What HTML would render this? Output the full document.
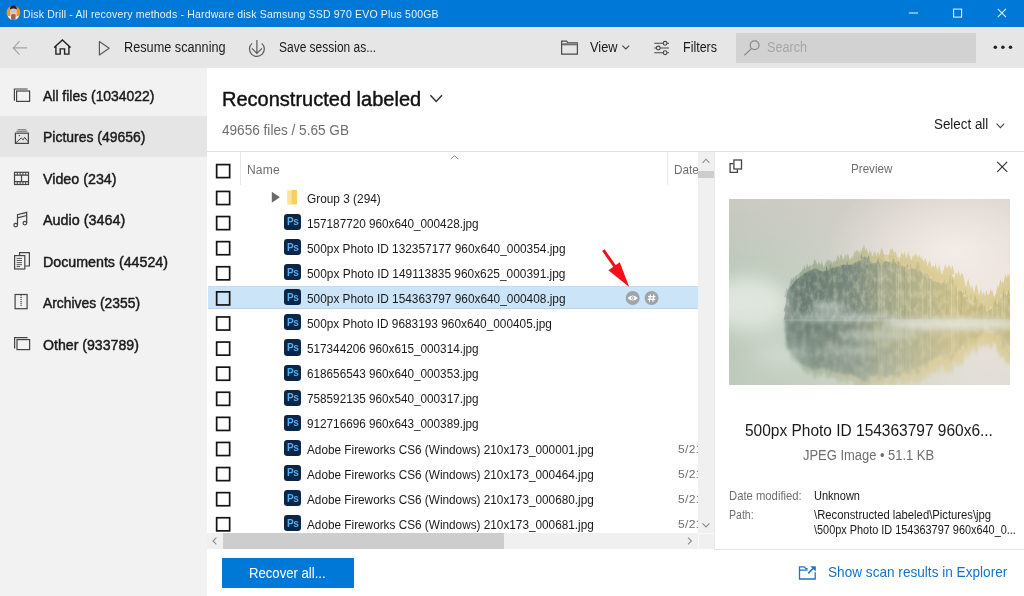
<!DOCTYPE html>
<html lang="en">
<head>
<meta charset="utf-8">
<title>Disk Drill</title>
<style>
*{box-sizing:border-box;margin:0;padding:0}
html,body{width:1024px;height:596px;overflow:hidden;background:#fff}
body{font-family:"Liberation Sans",sans-serif;color:#1a1a1a;position:relative}
.abs{position:absolute}
.t{position:absolute;white-space:nowrap;line-height:1;transform-origin:0 0}
svg{position:absolute;overflow:visible}
#titlebar{left:0;top:0;width:1024px;height:27px;background:#0078d7}
#toolbar{left:0;top:27px;width:1024px;height:41px;background:#e6e6e6}
#sidebar{left:0;top:68px;width:207px;height:528px;background:#f2f2f2}
#sidesel{left:0;top:116px;width:207px;height:41px;background:#e5e5e5}
#search{left:736px;top:33px;width:240px;height:30px;background:#d2d2d2}
#hline{left:207px;top:151px;width:817px;height:1px;background:#e2e2e2}
#colsep1{left:240px;top:152px;width:1px;height:33px;background:#e8e8e8}
#colsep2{left:667px;top:152px;width:1px;height:33px;background:#e8e8e8}
#rowsel{left:208px;top:286px;width:490px;height:23px;background:#cce4f7;border-top:1px solid #c0dcf3;border-bottom:1px solid #b9d6ee}
#vscroll{left:698px;top:152px;width:16px;height:397px;background:#f0f0f0}
#vthumb{left:698px;top:171px;width:16px;height:7px;background:#cdcdcd}
#hscroll{left:207px;top:533px;width:491px;height:16px;background:#f0f0f0}
#hthumb{left:223px;top:533px;width:281px;height:16px;background:#cdcdcd}
#pborder{left:714px;top:152px;width:1px;height:397px;background:#e8e8e8}
#pline{left:714px;top:549px;width:310px;height:1px;background:#e2e2e2}
#recover{left:222px;top:558px;width:132px;height:30px;background:#0078d7}
#datecol{left:673px;top:152px;width:25px;height:381px;overflow:hidden}
.cb{position:absolute;left:215.7px;width:14.8px;height:14.8px;border:1.7px solid #141414;background:transparent}
.ps{position:absolute;left:283.6px;width:17.6px;height:16.2px;border-radius:3.2px;background:#0b2547}
.ps span{transform:scaleX(0.9999);transform-origin:0 0;position:absolute;left:3.3px;top:3.6px;font-size:10px;font-weight:bold;color:#52aef4;line-height:1;letter-spacing:-0.5px}
</style>
</head>
<body>
<!-- TITLE BAR -->
<div id="titlebar" class="abs"></div>
<!-- TOOLBAR -->
<div id="toolbar" class="abs"></div>
<div id="search" class="abs"></div>
<!-- SIDEBAR -->
<div id="sidebar" class="abs"></div>
<div id="sidesel" class="abs"></div>
<!-- MAIN -->
<div id="hline" class="abs"></div>
<div id="colsep1" class="abs"></div>
<div id="colsep2" class="abs"></div>
<div id="rowsel" class="abs"></div>
<div id="vscroll" class="abs"></div>
<div id="vthumb" class="abs"></div>
<div id="hscroll" class="abs"></div>
<div id="hthumb" class="abs"></div>
<div id="pborder" class="abs"></div>
<div class="abs" style="left:698px;top:533px;width:16px;height:1px;background:#fafafa"></div>
<div class="abs" style="left:698px;top:533px;width:1px;height:16px;background:#fafafa"></div>
<div id="pline" class="abs"></div>
<div id="recover" class="abs"></div>
<div id="datecol" class="abs">
<div class="t" style="left:0.8px;top:11.6px;font-size:12px;color:#6e6e6e;transform:scaleX(0.98)">Date modified</div>
<div class="t" style="left:4.6px;top:291.9px;font-size:11.5px;color:#6e6e6e;letter-spacing:0.3px;transform:scaleX(1.05)">5/21/2019 10:15 AM</div>
<div class="t" style="left:4.6px;top:317.0px;font-size:11.5px;color:#6e6e6e;letter-spacing:0.3px;transform:scaleX(1.05)">5/21/2019 10:15 AM</div>
<div class="t" style="left:4.6px;top:342.1px;font-size:11.5px;color:#6e6e6e;letter-spacing:0.3px;transform:scaleX(1.05)">5/21/2019 10:15 AM</div>
<div class="t" style="left:4.6px;top:367.2px;font-size:11.5px;color:#6e6e6e;letter-spacing:0.3px;transform:scaleX(1.05)">5/21/2019 10:15 AM</div>
</div>
<svg width="1024" height="596" viewBox="0 0 1024 596" style="left:0;top:0" fill="none" stroke="#141414" stroke-width="1.7"><rect x="216.65" y="164.6" width="13" height="13"/><rect x="216.65" y="191.45" width="13" height="13.1"/><rect x="216.65" y="216.55" width="13" height="13.1"/><rect x="216.65" y="241.65" width="13" height="13.1"/><rect x="216.65" y="266.75" width="13" height="13.1"/><rect x="216.65" y="291.85" width="13" height="13.1"/><rect x="216.65" y="316.95" width="13" height="13.1"/><rect x="216.65" y="342.05" width="13" height="13.1"/><rect x="216.65" y="367.15" width="13" height="13.1"/><rect x="216.65" y="392.25" width="13" height="13.1"/><rect x="216.65" y="417.35" width="13" height="13.1"/><rect x="216.65" y="442.45" width="13" height="13.1"/><rect x="216.65" y="467.55" width="13" height="13.1"/><rect x="216.65" y="492.65" width="13" height="13.1"/><rect x="216.65" y="517.75" width="13" height="13.1"/></svg>
<div class="ps" style="top:213.9px"><span>Ps</span></div>
<div class="ps" style="top:239.0px"><span>Ps</span></div>
<div class="ps" style="top:264.1px"><span>Ps</span></div>
<div class="ps" style="top:289.2px"><span>Ps</span></div>
<div class="ps" style="top:314.3px"><span>Ps</span></div>
<div class="ps" style="top:339.4px"><span>Ps</span></div>
<div class="ps" style="top:364.5px"><span>Ps</span></div>
<div class="ps" style="top:389.6px"><span>Ps</span></div>
<div class="ps" style="top:414.7px"><span>Ps</span></div>
<div class="ps" style="top:439.8px"><span>Ps</span></div>
<div class="ps" style="top:464.9px"><span>Ps</span></div>
<div class="ps" style="top:490.0px"><span>Ps</span></div>
<div class="ps" style="top:515.1px"><span>Ps</span></div>
<div class="t" style="left:23.4px;top:8.8px;font-size:10.5px;color:#e6f2fc;letter-spacing:0.186px;transform:scaleX(0.9999);">Disk Drill - All recovery methods - Hardware disk Samsung SSD 970 EVO Plus 500GB</div>
<div class="t" style="left:123.6px;top:40.0px;font-size:14px;color:#1a1a1a;transform:scaleX(0.9066);">Resume scanning</div>
<div class="t" style="left:278.5px;top:40.0px;font-size:14px;color:#1a1a1a;transform:scaleX(0.8554);">Save session as...</div>
<div class="t" style="left:589.5px;top:40.1px;font-size:14px;color:#1a1a1a;transform:scaleX(0.9138);">View</div>
<div class="t" style="left:683.0px;top:40.1px;font-size:14px;color:#1a1a1a;transform:scaleX(0.8918);">Filters</div>
<div class="t" style="left:767.4px;top:40.4px;font-size:14px;color:#a6a6a6;transform:scaleX(0.9017);">Search</div>
<div class="t" style="left:42.8px;top:88.7px;font-size:14.5px;color:#1a1a1a;transform:scaleX(0.9606);-webkit-text-stroke:0.45px currentColor;">All files (1034022)</div>
<div class="t" style="left:42.8px;top:129.9px;font-size:14.5px;color:#1a1a1a;transform:scaleX(0.9625);-webkit-text-stroke:0.45px currentColor;">Pictures (49656)</div>
<div class="t" style="left:42.8px;top:171.5px;font-size:14.5px;color:#1a1a1a;transform:scaleX(0.9839);-webkit-text-stroke:0.45px currentColor;">Video (234)</div>
<div class="t" style="left:42.8px;top:212.8px;font-size:14.5px;color:#1a1a1a;transform:scaleX(0.9900);-webkit-text-stroke:0.45px currentColor;">Audio (3464)</div>
<div class="t" style="left:42.8px;top:254.7px;font-size:14.5px;color:#1a1a1a;transform:scaleX(0.9816);-webkit-text-stroke:0.45px currentColor;">Documents (44524)</div>
<div class="t" style="left:42.8px;top:295.5px;font-size:14.5px;color:#1a1a1a;transform:scaleX(0.9552);-webkit-text-stroke:0.45px currentColor;">Archives (2355)</div>
<div class="t" style="left:42.8px;top:337.5px;font-size:14.5px;color:#1a1a1a;transform:scaleX(0.9752);-webkit-text-stroke:0.45px currentColor;">Other (933789)</div>
<div class="t" style="left:221.8px;top:88.7px;font-size:20px;color:#111111;letter-spacing:0.009px;transform:scaleX(0.9999);-webkit-text-stroke:0.42px currentColor;">Reconstructed labeled</div>
<div class="t" style="left:222.0px;top:122.6px;font-size:14px;color:#6e6e6e;transform:scaleX(0.9712);">49656 files / 5.65 GB</div>
<div class="t" style="left:933.5px;top:117.4px;font-size:14px;color:#1a1a1a;transform:scaleX(0.9558);">Select all</div>
<div class="t" style="left:247.2px;top:163.6px;font-size:12px;color:#6e6e6e;letter-spacing:0.195px;transform:scaleX(0.9999);">Name</div>
<div class="t" style="left:850.5px;top:163.4px;font-size:12px;color:#6e6e6e;transform:scaleX(0.9698);">Preview</div>
<div class="t" style="left:307.2px;top:191.5px;font-size:13px;color:#1a1a1a;transform:scaleX(0.9112);">Group 3 (294)</div>
<div class="t" style="left:307.2px;top:216.6px;font-size:13px;color:#1a1a1a;transform:scaleX(0.9025);">157187720 960x640_000428.jpg</div>
<div class="t" style="left:307.2px;top:241.7px;font-size:13px;color:#1a1a1a;transform:scaleX(0.9123);">500px Photo ID 132357177 960x640_000354.jpg</div>
<div class="t" style="left:307.2px;top:266.8px;font-size:13px;color:#1a1a1a;transform:scaleX(0.9153);">500px Photo ID 149113835 960x625_000391.jpg</div>
<div class="t" style="left:307.2px;top:291.9px;font-size:13px;color:#1a1a1a;transform:scaleX(0.9123);">500px Photo ID 154363797 960x640_000408.jpg</div>
<div class="t" style="left:307.2px;top:317.0px;font-size:13px;color:#1a1a1a;transform:scaleX(0.9104);">500px Photo ID 9683193 960x640_000405.jpg</div>
<div class="t" style="left:307.2px;top:342.1px;font-size:13px;color:#1a1a1a;transform:scaleX(0.9025);">517344206 960x615_000314.jpg</div>
<div class="t" style="left:307.2px;top:367.2px;font-size:13px;color:#1a1a1a;transform:scaleX(0.9025);">618656543 960x640_000353.jpg</div>
<div class="t" style="left:307.2px;top:392.3px;font-size:13px;color:#1a1a1a;transform:scaleX(0.9025);">758592135 960x540_000317.jpg</div>
<div class="t" style="left:307.2px;top:417.4px;font-size:13px;color:#1a1a1a;transform:scaleX(0.9025);">912716696 960x643_000389.jpg</div>
<div class="t" style="left:307.2px;top:442.5px;font-size:13px;color:#1a1a1a;transform:scaleX(0.9061);">Adobe Fireworks CS6 (Windows) 210x173_000001.jpg</div>
<div class="t" style="left:307.2px;top:467.6px;font-size:13px;color:#1a1a1a;transform:scaleX(0.9061);">Adobe Fireworks CS6 (Windows) 210x173_000464.jpg</div>
<div class="t" style="left:307.2px;top:492.7px;font-size:13px;color:#1a1a1a;transform:scaleX(0.9061);">Adobe Fireworks CS6 (Windows) 210x173_000680.jpg</div>
<div class="t" style="left:307.2px;top:517.8px;font-size:13px;color:#1a1a1a;transform:scaleX(0.9061);">Adobe Fireworks CS6 (Windows) 210x173_000681.jpg</div>
<div class="t" style="left:745.2px;top:423.1px;font-size:16px;color:#1a1a1a;transform:scaleX(0.9676);">500px Photo ID 154363797 960x6...</div>
<div class="t" style="left:803.3px;top:448.3px;font-size:14px;color:#6e6e6e;transform:scaleX(0.9242);">JPEG Image • 51.1 KB</div>
<div class="t" style="left:729.1px;top:489.5px;font-size:12px;color:#6e6e6e;transform:scaleX(0.9396);">Date modified:</div>
<div class="t" style="left:813.9px;top:489.5px;font-size:12px;color:#1a1a1a;transform:scaleX(0.9194);">Unknown</div>
<div class="t" style="left:729.1px;top:508.6px;font-size:12px;color:#6e6e6e;transform:scaleX(0.8776);">Path:</div>
<div class="t" style="left:813.9px;top:508.6px;font-size:12px;color:#1a1a1a;transform:scaleX(0.9381);">\Reconstructed labeled\Pictures\jpg</div>
<div class="t" style="left:813.9px;top:523.7px;font-size:12px;color:#1a1a1a;transform:scaleX(0.9087);">\500px Photo ID 154363797 960x640_0...</div>
<div class="t" style="left:249.4px;top:566.1px;font-size:14px;color:#ffffff;transform:scaleX(0.9375);">Recover all...</div>
<div class="t" style="left:828.4px;top:565.2px;font-size:14.5px;color:#1672c9;transform:scaleX(0.9387);">Show scan results in Explorer</div>
<svg id="pimg" width="281" height="186.5" viewBox="0 0 281 186.5" style="left:729px;top:198.8px;overflow:hidden" preserveAspectRatio="none">
<defs>
<linearGradient id="bg" x1="0" y1="0" x2="1" y2="0"><stop offset="0" stop-color="#bac9b9"/><stop offset="0.3" stop-color="#c8d1c3"/><stop offset="0.6" stop-color="#e0dcd1"/><stop offset="0.85" stop-color="#efe6e0"/><stop offset="1" stop-color="#efe5df"/></linearGradient>
<linearGradient id="bgv" x1="0" y1="0" x2="0" y2="1"><stop offset="0" stop-color="#d2cbc8" stop-opacity="0.7"/><stop offset="0.45" stop-color="#d2cbc8" stop-opacity="0"/><stop offset="1" stop-color="#c6d4c6" stop-opacity="0.3"/></linearGradient>
<radialGradient id="sun" cx="0.8" cy="0.28" r="0.45"><stop offset="0" stop-color="#f8f1eb" stop-opacity="0.95"/><stop offset="1" stop-color="#f3ebe4" stop-opacity="0"/></radialGradient>
<linearGradient id="trA" gradientUnits="userSpaceOnUse" x1="55" y1="0" x2="281" y2="0"><stop offset="0" stop-color="#8aa191"/><stop offset="0.22" stop-color="#a3ad8b"/><stop offset="0.5" stop-color="#d3c27a"/><stop offset="0.8" stop-color="#dcc982"/><stop offset="1" stop-color="#d2c276"/></linearGradient>
<linearGradient id="trB" gradientUnits="userSpaceOnUse" x1="55" y1="0" x2="281" y2="0"><stop offset="0" stop-color="#5c7067"/><stop offset="0.3" stop-color="#687b70"/><stop offset="0.5" stop-color="#99a079"/><stop offset="0.75" stop-color="#c4b673"/><stop offset="1" stop-color="#b7ae6c"/></linearGradient>
<linearGradient id="mk" gradientUnits="userSpaceOnUse" x1="55" y1="0" x2="281" y2="0"><stop offset="0" stop-color="#fff" stop-opacity="1"/><stop offset="0.4" stop-color="#fff" stop-opacity="0.85"/><stop offset="0.7" stop-color="#fff" stop-opacity="0.85"/><stop offset="1" stop-color="#fff" stop-opacity="0.85"/></linearGradient>
<linearGradient id="rf" gradientUnits="userSpaceOnUse" x1="0" y1="120" x2="0" y2="187"><stop offset="0" stop-color="#fff" stop-opacity="1"/><stop offset="0.6" stop-color="#fff" stop-opacity="0.82"/><stop offset="1" stop-color="#fff" stop-opacity="0.55"/></linearGradient>
<mask id="mA"><rect width="281" height="187" fill="url(#mk)"/></mask>
<mask id="mR"><rect width="281" height="187" fill="url(#rf)"/></mask>
<filter id="b1" x="-10%" y="-10%" width="120%" height="120%"><feGaussianBlur stdDeviation="0.55"/></filter>
<filter id="b2" x="-10%" y="-10%" width="120%" height="120%"><feGaussianBlur stdDeviation="0.9"/></filter>
<filter id="b6" x="-60%" y="-60%" width="220%" height="220%"><feGaussianBlur stdDeviation="9"/></filter>
<filter id="b3" x="-50%" y="-50%" width="200%" height="200%"><feGaussianBlur stdDeviation="3"/></filter>
<filter id="mot" x="0" y="0" width="100%" height="100%"><feTurbulence type="fractalNoise" baseFrequency="0.22 0.12" numOctaves="3" seed="9" result="n"/><feColorMatrix in="n" type="matrix" values="0 0 0 0 1  0 0 0 0 1  0 0 0 0 1  0 0 0 2.4 -0.45" result="a"/><feComposite in="SourceGraphic" in2="a" operator="in"/></filter>
<filter id="grain" x="0" y="0" width="100%" height="100%"><feTurbulence type="fractalNoise" baseFrequency="0.8" numOctaves="2" seed="4"/><feColorMatrix type="matrix" values="0 0 0 0 0.5  0 0 0 0 0.5  0 0 0 0 0.45  0 0 0 0.12 0"/></filter>
</defs>
<rect width="281" height="186.5" fill="url(#bg)"/>
<rect width="281" height="186.5" fill="url(#bgv)"/>
<rect width="281" height="186.5" fill="url(#sun)"/>
<g mask="url(#mA)"><g filter="url(#b1)"><polygon points="55.2,120.5 55.2,120.5 58.2,91.0 61.2,85.1 64.2,80.6 67.2,77.2 70.2,73.9 73.2,71.8 76.2,69.7 79.2,67.9 82.2,66.2 85.2,64.5 88.2,65.5 91.2,66.8 94.2,67.7 97.2,66.3 100.2,64.9 103.2,63.5 106.2,62.5 109.2,61.6 112.2,60.7 115.2,60.3 118.2,60.1 121.2,60.0 124.2,58.7 127.2,57.3 130.2,55.6 133.2,52.9 136.2,51.0 139.2,54.1 142.2,57.2 145.2,57.6 148.2,56.9 151.2,56.3 154.2,55.6 157.2,55.4 160.2,56.0 163.2,56.6 166.2,57.2 169.2,58.1 172.2,58.9 175.2,59.8 178.2,60.6 181.2,61.3 184.2,61.9 187.2,62.5 190.2,63.7 193.2,65.8 196.2,67.9 199.2,69.9 202.2,71.5 205.2,73.1 208.2,74.7 211.2,75.1 214.2,75.2 217.2,75.3 220.2,75.4 223.2,76.4 226.2,78.5 229.2,80.6 232.2,82.9 235.2,86.6 238.2,90.3 241.2,92.8 244.2,93.7 247.2,95.3 250.2,99.6 253.2,103.8 256.2,103.3 259.2,102.1 262.2,99.7 265.2,97.3 268.2,94.8 271.2,91.6 274.2,88.4 277.2,86.7 280.2,85.1 283.2,85.0 284.0,120.5" fill="url(#trA)" opacity="0.55"/><path d="M108.5 69.9 L111.4 57.5 L114.4 69.9ZM192.5 70.2 L194.8 60.4 L197.1 70.2ZM57.5 98.9 L60.2 87.5 L63.0 98.9ZM107.5 73.7 L110.6 60.5 L113.8 73.7ZM244.3 101.1 L247.8 86.5 L251.2 101.1ZM87.6 81.4 L91.5 64.9 L95.5 81.4ZM172.9 70.0 L176.4 55.1 L179.9 70.0ZM68.4 86.5 L71.8 72.3 L75.2 86.5ZM121.9 67.3 L125.9 50.8 L129.8 67.3ZM161.0 68.9 L164.9 52.3 L168.9 68.9ZM216.9 82.3 L219.9 69.7 L222.9 82.3ZM235.6 99.8 L239.7 82.7 L243.7 99.8ZM254.9 101.3 L257.4 90.9 L259.9 101.3ZM103.6 74.6 L106.7 61.7 L109.7 74.6ZM196.8 75.2 L200.0 61.7 L203.2 75.2ZM141.8 65.7 L145.1 51.6 L148.5 65.7ZM186.7 74.1 L190.3 59.2 L193.9 74.1ZM264.6 103.7 L268.8 86.1 L273.0 103.7ZM206.2 81.7 L210.1 65.2 L214.1 81.7ZM273.6 92.7 L276.9 78.7 L280.3 92.7ZM216.0 81.7 L219.8 65.5 L223.7 81.7ZM185.5 64.2 L187.9 54.4 L190.2 64.2ZM249.4 105.1 L251.7 95.1 L254.1 105.1ZM237.1 92.9 L239.6 82.4 L242.1 92.9ZM120.2 72.7 L124.2 56.1 L128.1 72.7ZM65.0 85.6 L67.3 76.0 L69.6 85.6ZM216.9 82.8 L220.9 66.2 L224.8 82.8ZM276.4 91.9 L280.6 74.3 L284.8 91.9ZM124.4 64.3 L127.8 50.1 L131.2 64.3ZM61.4 89.6 L64.4 76.9 L67.4 89.6ZM194.0 68.2 L196.3 58.6 L198.6 68.2ZM250.8 110.0 L254.9 92.7 L259.0 110.0ZM258.3 102.7 L261.5 89.6 L264.6 102.7ZM172.3 68.6 L175.7 54.4 L179.1 68.6ZM180.5 73.1 L184.6 55.9 L188.7 73.1ZM169.1 67.7 L172.7 52.4 L176.4 67.7ZM107.2 73.5 L111.4 56.1 L115.5 73.5ZM173.7 63.2 L175.9 53.9 L178.2 63.2ZM149.6 60.6 L151.8 51.2 L154.1 60.6ZM195.2 72.0 L197.5 62.3 L199.8 72.0ZM196.6 77.7 L200.1 62.8 L203.7 77.7ZM133.9 64.3 L137.5 48.8 L141.2 64.3ZM58.7 93.6 L62.3 78.7 L65.8 93.6ZM273.5 88.0 L276.6 74.9 L279.8 88.0ZM189.3 69.2 L192.2 56.9 L195.2 69.2ZM125.1 65.7 L128.5 51.5 L131.8 65.7ZM121.9 68.7 L125.7 53.0 L129.4 68.7ZM59.7 95.8 L63.4 80.3 L67.0 95.8ZM124.0 66.9 L127.9 50.9 L131.7 66.9ZM108.5 68.2 L111.6 55.3 L114.7 68.2ZM213.4 76.8 L216.2 64.8 L219.1 76.8ZM130.2 63.2 L133.3 50.3 L136.3 63.2ZM249.2 102.7 L252.1 90.7 L255.0 102.7ZM202.2 80.9 L205.3 67.9 L208.4 80.9ZM105.2 69.7 L108.5 56.0 L111.8 69.7ZM96.8 79.5 L100.7 63.2 L104.6 79.5ZM95.2 76.9 L99.1 60.9 L102.9 76.9ZM200.6 78.6 L203.4 66.5 L206.3 78.6ZM83.0 76.9 L86.8 61.0 L90.6 76.9ZM116.0 67.9 L119.0 55.1 L122.0 67.9ZM148.8 66.9 L152.8 49.9 L156.9 66.9ZM88.7 78.8 L92.8 61.6 L96.9 78.8ZM254.6 109.1 L257.7 96.2 L260.7 109.1ZM271.0 92.3 L273.6 81.2 L276.3 92.3ZM223.5 87.3 L227.0 72.5 L230.6 87.3ZM172.6 64.3 L175.5 52.2 L178.3 64.3ZM105.7 69.7 L109.1 55.5 L112.4 69.7ZM120.3 66.8 L122.6 57.2 L124.9 66.8ZM259.0 107.2 L263.0 90.2 L267.1 107.2ZM258.1 106.9 L261.4 92.8 L264.8 106.9ZM57.7 97.6 L60.2 87.0 L62.8 97.6ZM122.3 68.4 L125.5 54.8 L128.8 68.4ZM148.1 67.9 L151.5 53.5 L154.9 67.9ZM131.1 61.6 L135.0 45.1 L138.9 61.6ZM163.0 65.1 L165.9 52.9 L168.8 65.1ZM98.4 76.9 L102.2 60.8 L106.0 76.9ZM92.2 82.4 L96.3 65.4 L100.3 82.4ZM238.6 94.9 L240.8 85.6 L243.0 94.9ZM198.1 75.0 L200.4 65.3 L202.7 75.0ZM115.8 68.3 L119.1 54.7 L122.3 68.3ZM149.8 65.9 L153.6 50.1 L157.3 65.9ZM55.2 98.3 L57.7 88.0 L60.1 98.3ZM81.5 76.6 L85.6 59.2 L89.8 76.6ZM248.6 103.3 L251.9 89.8 L255.1 103.3ZM126.3 62.9 L129.2 50.7 L132.1 62.9ZM201.7 78.0 L204.6 65.7 L207.5 78.0ZM98.3 70.6 L100.8 60.3 L103.2 70.6ZM180.8 68.8 L183.8 56.4 L186.7 68.8ZM72.5 78.5 L75.4 66.1 L78.4 78.5ZM191.9 73.9 L194.9 61.5 L197.9 73.9ZM236.7 96.7 L239.7 83.8 L242.8 96.7ZM138.5 67.2 L142.1 52.0 L145.7 67.2ZM149.9 64.7 L153.0 51.6 L156.1 64.7ZM109.5 72.0 L113.1 56.9 L116.7 72.0ZM70.5 81.8 L73.5 69.0 L76.6 81.8ZM254.6 108.3 L257.6 95.9 L260.5 108.3ZM259.0 103.3 L261.7 91.9 L264.5 103.3ZM159.1 64.5 L163.0 48.4 L166.8 64.5ZM204.3 85.1 L208.1 69.2 L211.9 85.1ZM206.0 82.6 L209.3 68.7 L212.6 82.6ZM78.5 74.4 L80.7 65.1 L82.9 74.4ZM87.6 74.7 L89.9 65.1 L92.2 74.7ZM74.2 80.4 L78.2 63.8 L82.1 80.4ZM94.2 76.2 L98.0 59.9 L101.9 76.2ZM81.3 79.1 L84.9 64.2 L88.4 79.1ZM244.3 103.3 L247.7 89.2 L251.0 103.3ZM235.4 95.3 L239.2 79.6 L242.9 95.3ZM171.3 64.5 L173.7 54.3 L176.1 64.5ZM225.5 83.4 L227.8 73.6 L230.1 83.4ZM127.2 66.9 L131.1 50.7 L134.9 66.9ZM109.7 66.3 L112.4 55.0 L115.1 66.3ZM194.6 75.6 L197.5 63.0 L200.5 75.6ZM138.0 62.5 L140.9 50.3 L143.8 62.5ZM149.3 61.5 L152.5 48.1 L155.7 61.5ZM275.2 90.2 L278.9 74.6 L282.6 90.2ZM90.1 81.6 L93.8 66.0 L97.5 81.6ZM207.6 80.7 L210.7 67.4 L213.9 80.7ZM201.2 77.6 L203.7 67.1 L206.2 77.6ZM75.0 84.1 L79.1 67.1 L83.1 84.1ZM171.4 68.3 L175.1 53.0 L178.7 68.3ZM97.0 71.5 L99.6 60.5 L102.2 71.5ZM188.0 67.0 L190.6 55.8 L193.3 67.0ZM211.9 81.7 L214.7 69.9 L217.4 81.7ZM214.0 83.1 L217.9 66.7 L221.8 83.1ZM187.8 66.5 L190.4 55.4 L193.0 66.5ZM59.5 93.3 L62.5 80.8 L65.5 93.3ZM93.6 74.6 L96.5 62.7 L99.3 74.6ZM229.4 91.2 L233.6 73.6 L237.8 91.2ZM163.3 65.1 L166.5 51.9 L169.6 65.1ZM244.0 101.9 L247.3 88.0 L250.6 101.9ZM163.0 69.1 L166.9 52.7 L170.8 69.1ZM144.3 70.3 L148.4 53.0 L152.5 70.3ZM161.0 60.4 L163.7 49.2 L166.4 60.4ZM216.6 85.5 L220.7 68.2 L224.8 85.5ZM249.1 101.4 L251.7 90.6 L254.3 101.4ZM112.5 69.6 L116.1 54.4 L119.8 69.6ZM250.1 107.4 L252.8 96.0 L255.5 107.4ZM251.2 105.7 L254.3 92.9 L257.3 105.7ZM220.9 75.6 L223.3 65.5 L225.7 75.6ZM244.3 96.8 L247.2 84.6 L250.1 96.8ZM187.2 66.5 L189.4 57.2 L191.6 66.5ZM130.3 61.0 L133.5 47.7 L136.7 61.0ZM101.0 77.2 L105.1 59.9 L109.2 77.2ZM143.8 62.7 L146.3 52.5 L148.7 62.7ZM117.4 67.2 L119.8 57.0 L122.2 67.2ZM256.9 104.7 L259.3 94.6 L261.7 104.7ZM267.9 95.8 L271.6 80.1 L275.4 95.8ZM226.2 86.0 L229.7 71.0 L233.3 86.0ZM203.5 79.3 L206.2 67.8 L208.9 79.3ZM225.5 89.5 L229.0 74.6 L232.6 89.5ZM176.2 65.5 L179.4 52.1 L182.5 65.5ZM133.9 63.7 L137.5 48.8 L141.0 63.7ZM182.8 68.2 L186.2 53.6 L189.7 68.2ZM197.0 78.2 L200.9 61.5 L204.9 78.2ZM202.4 80.9 L206.5 63.9 L210.6 80.9ZM85.8 77.5 L89.4 62.3 L93.1 77.5ZM189.8 73.7 L193.3 59.0 L196.8 73.7ZM158.9 60.1 L161.5 49.3 L164.0 60.1ZM69.2 86.8 L72.9 71.3 L76.6 86.8ZM178.0 68.3 L180.9 56.1 L183.9 68.3ZM113.8 72.0 L117.8 55.5 L121.7 72.0ZM64.1 87.2 L66.8 75.9 L69.5 87.2ZM229.5 85.5 L232.4 73.4 L235.2 85.5ZM145.4 67.4 L149.1 51.7 L152.9 67.4ZM135.2 59.9 L137.6 49.7 L140.0 59.9ZM116.4 63.9 L118.8 53.7 L121.3 63.9ZM232.1 89.2 L234.7 78.4 L237.2 89.2ZM96.6 76.6 L100.3 61.1 L104.0 76.6ZM239.7 99.9 L243.0 85.7 L246.4 99.9ZM88.0 74.0 L90.6 63.1 L93.2 74.0Z" fill="url(#trA)" opacity="0.8"/><g filter="url(#mot)"><polygon points="55.2,120.5 55.2,120.5 58.2,94.6 61.2,88.8 64.2,84.4 67.2,81.1 70.2,77.9 73.2,75.9 76.2,73.9 79.2,72.2 82.2,70.6 85.2,69.0 88.2,70.1 91.2,71.5 94.2,72.5 97.2,71.2 100.2,69.9 103.2,68.6 106.2,67.7 109.2,66.9 112.2,66.1 115.2,65.8 118.2,65.7 121.2,65.7 124.2,64.5 127.2,63.1 130.2,61.6 133.2,59.0 136.2,57.2 139.2,60.4 142.2,63.6 145.2,64.1 148.2,63.5 151.2,63.0 154.2,62.4 157.2,62.3 160.2,63.0 163.2,63.7 166.2,64.4 169.2,65.4 172.2,66.3 175.2,67.3 178.2,68.2 181.2,69.0 184.2,69.7 187.2,70.4 190.2,71.7 193.2,73.9 196.2,76.1 199.2,78.2 202.2,79.9 205.2,81.6 208.2,83.3 211.2,83.8 214.2,84.0 217.2,84.2 220.2,84.4 223.2,85.4 226.2,87.6 229.2,89.8 232.2,92.3 235.2,96.1 238.2,99.9 241.2,102.5 244.2,103.5 247.2,105.1 250.2,109.5 253.2,113.9 256.2,113.5 259.2,112.4 262.2,110.1 265.2,107.8 268.2,105.4 271.2,102.3 274.2,99.2 277.2,97.5 280.2,96.1 283.2,96.0 284.0,120.5" fill="url(#trB)"/><path d="M194.6 96.2 L199.1 77.3 L203.6 96.2ZM267.1 118.5 L271.9 98.3 L276.7 118.5ZM59.0 106.2 L63.9 85.8 L68.7 106.2ZM202.2 94.1 L205.1 82.0 L207.9 94.1ZM160.2 75.6 L164.1 59.2 L168.0 75.6ZM184.8 75.9 L188.0 62.8 L191.1 75.9ZM116.5 87.8 L120.9 69.2 L125.3 87.8ZM90.7 88.2 L93.6 75.8 L96.5 88.2ZM195.3 81.2 L197.9 70.3 L200.5 81.2ZM252.6 118.6 L255.7 105.5 L258.8 118.6ZM277.7 107.5 L281.0 93.7 L284.3 107.5ZM272.0 110.3 L276.2 92.6 L280.5 110.3ZM99.6 90.5 L103.9 72.6 L108.1 90.5ZM274.1 109.5 L277.4 95.5 L280.7 109.5ZM136.6 68.4 L139.5 56.0 L142.5 68.4ZM68.0 92.6 L72.1 75.6 L76.1 92.6ZM54.6 112.5 L58.0 98.2 L61.4 112.5ZM124.1 80.9 L127.8 65.1 L131.6 80.9ZM124.9 79.2 L129.2 61.1 L133.5 79.2ZM67.6 94.8 L70.2 83.7 L72.9 94.8ZM225.4 99.2 L228.0 88.1 L230.7 99.2ZM232.7 108.7 L236.7 92.0 L240.6 108.7ZM56.3 102.1 L59.3 89.4 L62.3 102.1ZM270.4 108.5 L274.8 89.9 L279.2 108.5ZM265.6 117.9 L269.0 103.5 L272.4 117.9ZM133.6 76.9 L138.1 58.1 L142.5 76.9ZM77.3 92.9 L81.9 73.9 L86.4 92.9ZM248.2 120.5 L253.0 103.9 L257.9 120.5ZM73.9 89.1 L78.0 72.0 L82.1 89.1ZM261.5 120.0 L266.3 99.8 L271.2 120.0ZM178.0 78.6 L181.4 64.5 L184.8 78.6ZM94.7 79.3 L97.7 66.9 L100.6 79.3ZM211.2 97.7 L214.2 85.2 L217.2 97.7ZM64.4 102.2 L68.3 85.9 L72.2 102.2ZM145.7 75.9 L149.7 59.0 L153.7 75.9ZM241.8 113.8 L245.4 98.6 L249.1 113.8ZM67.3 94.6 L69.9 83.3 L72.6 94.6ZM166.7 78.8 L169.7 66.6 L172.6 78.8ZM219.8 103.6 L223.9 86.3 L228.0 103.6ZM233.1 104.8 L236.7 89.5 L240.4 104.8ZM87.9 89.2 L91.2 75.3 L94.5 89.2ZM155.8 85.5 L160.5 66.0 L165.1 85.5ZM275.8 105.9 L279.5 90.0 L283.3 105.9ZM220.1 95.1 L223.4 81.3 L226.7 95.1ZM145.7 72.9 L149.2 58.2 L152.7 72.9ZM278.3 111.8 L282.4 94.6 L286.5 111.8ZM168.2 73.8 L171.0 61.9 L173.8 73.8ZM114.6 87.6 L119.3 67.9 L123.9 87.6ZM135.1 81.0 L139.5 62.3 L144.0 81.0ZM211.0 100.5 L215.4 81.9 L219.9 100.5ZM136.7 75.7 L140.0 62.0 L143.3 75.7ZM163.6 83.3 L167.9 65.4 L172.1 83.3ZM120.0 85.7 L124.2 68.2 L128.3 85.7ZM185.6 79.7 L189.5 63.3 L193.4 79.7ZM110.6 82.6 L114.3 67.0 L118.1 82.6ZM238.7 118.8 L243.2 99.9 L247.8 118.8ZM132.1 76.1 L136.5 57.7 L140.8 76.1ZM241.2 117.1 L245.9 97.7 L250.5 117.1ZM250.4 120.5 L255.4 110.3 L260.3 120.5ZM271.2 109.2 L275.1 93.0 L279.0 109.2ZM90.2 96.0 L95.1 75.6 L99.9 96.0ZM161.6 82.2 L165.9 64.1 L170.3 82.2ZM219.1 97.1 L223.6 78.3 L228.1 97.1ZM185.9 85.0 L189.5 69.8 L193.1 85.0ZM195.2 95.0 L199.3 77.7 L203.4 95.0ZM218.3 88.3 L221.3 75.7 L224.3 88.3ZM154.6 75.1 L157.7 62.0 L160.8 75.1ZM210.8 92.8 L213.5 81.5 L216.2 92.8ZM161.9 70.6 L164.7 59.1 L167.4 70.6ZM84.6 81.2 L87.7 68.5 L90.7 81.2ZM97.6 80.4 L101.3 64.7 L105.0 80.4ZM139.8 80.9 L143.9 64.0 L147.9 80.9ZM108.8 80.9 L111.4 70.0 L114.0 80.9ZM146.0 74.5 L149.6 59.4 L153.2 74.5ZM80.0 88.5 L83.5 73.8 L87.0 88.5ZM62.6 97.3 L65.5 85.4 L68.3 97.3ZM177.4 81.5 L181.4 64.7 L185.4 81.5ZM271.9 110.9 L275.5 95.8 L279.1 110.9ZM238.9 114.2 L242.4 99.6 L245.9 114.2ZM85.7 88.7 L89.6 72.1 L93.6 88.7ZM271.2 114.4 L275.3 97.4 L279.3 114.4ZM134.6 71.9 L137.2 61.0 L139.8 71.9ZM77.7 89.2 L81.8 72.1 L85.9 89.2ZM84.6 92.2 L89.3 72.3 L94.0 92.2ZM139.7 75.4 L142.8 62.2 L146.0 75.4ZM120.1 83.5 L123.6 68.7 L127.1 83.5ZM272.1 113.3 L276.1 96.4 L280.2 113.3ZM112.6 85.9 L116.4 70.0 L120.2 85.9ZM146.9 80.2 L151.9 59.3 L156.8 80.2ZM165.5 76.7 L169.2 60.9 L173.0 76.7ZM81.3 86.2 L85.0 70.9 L88.7 86.2ZM119.4 85.9 L124.0 66.6 L128.6 85.9ZM57.0 106.0 L60.3 92.4 L63.5 106.0ZM267.1 113.9 L270.3 100.5 L273.4 113.9ZM113.2 82.6 L118.2 61.7 L123.2 82.6ZM120.3 80.6 L124.0 64.9 L127.8 80.6ZM199.7 97.0 L204.1 78.6 L208.5 97.0ZM80.8 86.7 L84.2 72.7 L87.5 86.7ZM175.4 78.0 L178.8 64.1 L182.1 78.0ZM174.5 79.7 L177.9 65.2 L181.4 79.7ZM224.2 96.1 L226.9 84.8 L229.6 96.1ZM109.9 85.0 L114.7 64.8 L119.5 85.0ZM256.8 118.4 L259.5 107.4 L262.1 118.4ZM230.5 106.7 L234.5 90.0 L238.5 106.7ZM214.8 97.5 L218.5 81.7 L222.3 97.5ZM261.4 116.3 L264.9 101.4 L268.4 116.3ZM248.0 116.9 L251.3 103.0 L254.6 116.9ZM241.7 114.3 L246.3 94.9 L250.9 114.3ZM212.2 93.4 L215.4 79.6 L218.7 93.4ZM232.1 107.8 L235.1 95.5 L238.0 107.8ZM162.4 78.6 L166.2 62.7 L170.0 78.6ZM128.6 71.9 L132.6 55.1 L136.6 71.9ZM239.0 107.0 L242.1 93.8 L245.3 107.0ZM239.7 119.1 L243.9 101.5 L248.1 119.1ZM58.1 110.0 L63.1 89.2 L68.0 110.0ZM281.9 103.4 L284.6 92.0 L287.3 103.4ZM244.9 117.4 L249.0 100.0 L253.2 117.4ZM271.2 108.0 L274.1 95.7 L277.0 108.0ZM120.9 80.5 L123.9 68.1 L126.8 80.5ZM193.3 84.6 L196.3 72.1 L199.3 84.6Z" fill="url(#trB)"/></g><polygon points="55.2,120.5 55.2,120.5 58.2,95.3 61.2,89.5 64.2,85.2 67.2,81.9 70.2,78.7 73.2,76.7 76.2,74.8 79.2,73.1 82.2,71.5 85.2,69.9 88.2,71.1 91.2,72.5 94.2,73.4 97.2,72.1 100.2,70.9 103.2,69.6 106.2,68.7 109.2,68.0 112.2,67.2 115.2,66.9 118.2,66.8 121.2,66.8 124.2,65.7 127.2,64.3 130.2,62.8 133.2,60.2 136.2,58.4 139.2,61.7 142.2,64.9 145.2,65.4 148.2,64.8 151.2,64.3 154.2,63.8 157.2,63.7 160.2,64.4 163.2,65.1 166.2,65.8 169.2,66.8 172.2,67.8 175.2,68.7 178.2,69.7 181.2,70.5 184.2,71.2 187.2,72.0 190.2,73.3 193.2,75.5 196.2,77.7 199.2,79.9 202.2,81.6 205.2,83.3 208.2,85.0 211.2,85.5 214.2,85.7 217.2,86.0 220.2,86.2 223.2,87.3 226.2,89.5 229.2,91.7 232.2,94.1 235.2,98.0 238.2,101.8 241.2,104.5 244.2,105.4 247.2,107.1 250.2,111.5 253.2,115.9 256.2,115.5 259.2,114.4 262.2,112.1 265.2,109.9 268.2,107.5 271.2,104.4 274.2,101.4 277.2,99.7 280.2,98.3 283.2,98.2 284.0,120.5" fill="url(#trB)" opacity="0.45"/></g></g>
<g mask="url(#mA)"><g mask="url(#mR)"><g filter="url(#b2)"><polygon points="55.2,120.5 55.2,120.5 58.2,150.0 61.2,155.9 64.2,160.4 67.2,163.8 70.2,167.1 73.2,169.2 76.2,171.3 79.2,173.1 82.2,174.8 85.2,176.5 88.2,175.5 91.2,174.2 94.2,173.3 97.2,174.7 100.2,176.1 103.2,177.5 106.2,178.5 109.2,179.4 112.2,180.3 115.2,180.7 118.2,180.9 121.2,181.0 124.2,182.3 127.2,183.7 130.2,185.4 133.2,188.1 136.2,190.0 139.2,186.9 142.2,183.8 145.2,183.4 148.2,184.1 151.2,184.7 154.2,185.4 157.2,185.6 160.2,185.0 163.2,184.4 166.2,183.8 169.2,182.9 172.2,182.1 175.2,181.2 178.2,180.4 181.2,179.7 184.2,179.1 187.2,178.5 190.2,177.3 193.2,175.2 196.2,173.1 199.2,171.1 202.2,169.5 205.2,167.9 208.2,166.3 211.2,165.9 214.2,165.8 217.2,165.7 220.2,165.6 223.2,164.6 226.2,162.5 229.2,160.4 232.2,158.1 235.2,154.4 238.2,150.7 241.2,148.2 244.2,147.3 247.2,145.7 250.2,141.4 253.2,137.2 256.2,137.7 259.2,138.9 262.2,141.3 265.2,143.7 268.2,146.2 271.2,149.4 274.2,152.6 277.2,154.3 280.2,155.9 283.2,156.0 284.0,120.5" fill="url(#trA)" opacity="0.55"/><path d="M108.5 171.1 L111.4 183.5 L114.4 171.1ZM192.5 170.8 L194.8 180.6 L197.1 170.8ZM57.5 142.1 L60.2 153.5 L63.0 142.1ZM107.5 167.3 L110.6 180.5 L113.8 167.3ZM244.3 139.9 L247.8 154.5 L251.2 139.9ZM87.6 159.6 L91.5 176.1 L95.5 159.6ZM172.9 171.0 L176.4 185.9 L179.9 171.0ZM68.4 154.5 L71.8 168.7 L75.2 154.5ZM121.9 173.7 L125.9 190.2 L129.8 173.7ZM161.0 172.1 L164.9 188.7 L168.9 172.1ZM216.9 158.7 L219.9 171.3 L222.9 158.7ZM235.6 141.2 L239.7 158.3 L243.7 141.2ZM254.9 139.7 L257.4 150.1 L259.9 139.7ZM103.6 166.4 L106.7 179.3 L109.7 166.4ZM196.8 165.8 L200.0 179.3 L203.2 165.8ZM141.8 175.3 L145.1 189.4 L148.5 175.3ZM186.7 166.9 L190.3 181.8 L193.9 166.9ZM264.6 137.3 L268.8 154.9 L273.0 137.3ZM206.2 159.3 L210.1 175.8 L214.1 159.3ZM273.6 148.3 L276.9 162.3 L280.3 148.3ZM216.0 159.3 L219.8 175.5 L223.7 159.3ZM185.5 176.8 L187.9 186.6 L190.2 176.8ZM249.4 135.9 L251.7 145.9 L254.1 135.9ZM237.1 148.1 L239.6 158.6 L242.1 148.1ZM120.2 168.3 L124.2 184.9 L128.1 168.3ZM65.0 155.4 L67.3 165.0 L69.6 155.4ZM216.9 158.2 L220.9 174.8 L224.8 158.2ZM276.4 149.1 L280.6 166.7 L284.8 149.1ZM124.4 176.7 L127.8 190.9 L131.2 176.7ZM61.4 151.4 L64.4 164.1 L67.4 151.4ZM194.0 172.8 L196.3 182.4 L198.6 172.8ZM250.8 131.0 L254.9 148.3 L259.0 131.0ZM258.3 138.3 L261.5 151.4 L264.6 138.3ZM172.3 172.4 L175.7 186.6 L179.1 172.4ZM180.5 167.9 L184.6 185.1 L188.7 167.9ZM169.1 173.3 L172.7 188.6 L176.4 173.3ZM107.2 167.5 L111.4 184.9 L115.5 167.5ZM173.7 177.8 L175.9 187.1 L178.2 177.8ZM149.6 180.4 L151.8 189.8 L154.1 180.4ZM195.2 169.0 L197.5 178.7 L199.8 169.0ZM196.6 163.3 L200.1 178.2 L203.7 163.3ZM133.9 176.7 L137.5 192.2 L141.2 176.7ZM58.7 147.4 L62.3 162.3 L65.8 147.4ZM273.5 153.0 L276.6 166.1 L279.8 153.0ZM189.3 171.8 L192.2 184.1 L195.2 171.8ZM125.1 175.3 L128.5 189.5 L131.8 175.3ZM121.9 172.3 L125.7 188.0 L129.4 172.3ZM59.7 145.2 L63.4 160.7 L67.0 145.2ZM124.0 174.1 L127.9 190.1 L131.7 174.1ZM108.5 172.8 L111.6 185.7 L114.7 172.8ZM213.4 164.2 L216.2 176.2 L219.1 164.2ZM130.2 177.8 L133.3 190.7 L136.3 177.8ZM249.2 138.3 L252.1 150.3 L255.0 138.3ZM202.2 160.1 L205.3 173.1 L208.4 160.1ZM105.2 171.3 L108.5 185.0 L111.8 171.3ZM96.8 161.5 L100.7 177.8 L104.6 161.5ZM95.2 164.1 L99.1 180.1 L102.9 164.1ZM200.6 162.4 L203.4 174.5 L206.3 162.4ZM83.0 164.1 L86.8 180.0 L90.6 164.1ZM116.0 173.1 L119.0 185.9 L122.0 173.1ZM148.8 174.1 L152.8 191.1 L156.9 174.1ZM88.7 162.2 L92.8 179.4 L96.9 162.2ZM254.6 131.9 L257.7 144.8 L260.7 131.9ZM271.0 148.7 L273.6 159.8 L276.3 148.7ZM223.5 153.7 L227.0 168.5 L230.6 153.7ZM172.6 176.7 L175.5 188.8 L178.3 176.7ZM105.7 171.3 L109.1 185.5 L112.4 171.3ZM120.3 174.2 L122.6 183.8 L124.9 174.2ZM259.0 133.8 L263.0 150.8 L267.1 133.8ZM258.1 134.1 L261.4 148.2 L264.8 134.1ZM57.7 143.4 L60.2 154.0 L62.8 143.4ZM122.3 172.6 L125.5 186.2 L128.8 172.6ZM148.1 173.1 L151.5 187.5 L154.9 173.1ZM131.1 179.4 L135.0 195.9 L138.9 179.4ZM163.0 175.9 L165.9 188.1 L168.8 175.9ZM98.4 164.1 L102.2 180.2 L106.0 164.1ZM92.2 158.6 L96.3 175.6 L100.3 158.6ZM238.6 146.1 L240.8 155.4 L243.0 146.1ZM198.1 166.0 L200.4 175.7 L202.7 166.0ZM115.8 172.7 L119.1 186.3 L122.3 172.7ZM149.8 175.1 L153.6 190.9 L157.3 175.1ZM55.2 142.7 L57.7 153.0 L60.1 142.7ZM81.5 164.4 L85.6 181.8 L89.8 164.4ZM248.6 137.7 L251.9 151.2 L255.1 137.7ZM126.3 178.1 L129.2 190.3 L132.1 178.1ZM201.7 163.0 L204.6 175.3 L207.5 163.0ZM98.3 170.4 L100.8 180.7 L103.2 170.4ZM180.8 172.2 L183.8 184.6 L186.7 172.2ZM72.5 162.5 L75.4 174.9 L78.4 162.5ZM191.9 167.1 L194.9 179.5 L197.9 167.1ZM236.7 144.3 L239.7 157.2 L242.8 144.3ZM138.5 173.8 L142.1 189.0 L145.7 173.8ZM149.9 176.3 L153.0 189.4 L156.1 176.3ZM109.5 169.0 L113.1 184.1 L116.7 169.0ZM70.5 159.2 L73.5 172.0 L76.6 159.2ZM254.6 132.7 L257.6 145.1 L260.5 132.7ZM259.0 137.7 L261.7 149.1 L264.5 137.7ZM159.1 176.5 L163.0 192.6 L166.8 176.5ZM204.3 155.9 L208.1 171.8 L211.9 155.9ZM206.0 158.4 L209.3 172.3 L212.6 158.4ZM78.5 166.6 L80.7 175.9 L82.9 166.6ZM87.6 166.3 L89.9 175.9 L92.2 166.3ZM74.2 160.6 L78.2 177.2 L82.1 160.6ZM94.2 164.8 L98.0 181.1 L101.9 164.8ZM81.3 161.9 L84.9 176.8 L88.4 161.9ZM244.3 137.7 L247.7 151.8 L251.0 137.7ZM235.4 145.7 L239.2 161.4 L242.9 145.7ZM171.3 176.5 L173.7 186.7 L176.1 176.5ZM225.5 157.6 L227.8 167.4 L230.1 157.6ZM127.2 174.1 L131.1 190.3 L134.9 174.1ZM109.7 174.7 L112.4 186.0 L115.1 174.7ZM194.6 165.4 L197.5 178.0 L200.5 165.4ZM138.0 178.5 L140.9 190.7 L143.8 178.5ZM149.3 179.5 L152.5 192.9 L155.7 179.5ZM275.2 150.8 L278.9 166.4 L282.6 150.8ZM90.1 159.4 L93.8 175.0 L97.5 159.4ZM207.6 160.3 L210.7 173.6 L213.9 160.3ZM201.2 163.4 L203.7 173.9 L206.2 163.4ZM75.0 156.9 L79.1 173.9 L83.1 156.9ZM171.4 172.7 L175.1 188.0 L178.7 172.7ZM97.0 169.5 L99.6 180.5 L102.2 169.5ZM188.0 174.0 L190.6 185.2 L193.3 174.0ZM211.9 159.3 L214.7 171.1 L217.4 159.3ZM214.0 157.9 L217.9 174.3 L221.8 157.9ZM187.8 174.5 L190.4 185.6 L193.0 174.5ZM59.5 147.7 L62.5 160.2 L65.5 147.7ZM93.6 166.4 L96.5 178.3 L99.3 166.4ZM229.4 149.8 L233.6 167.4 L237.8 149.8ZM163.3 175.9 L166.5 189.1 L169.6 175.9ZM244.0 139.1 L247.3 153.0 L250.6 139.1ZM163.0 171.9 L166.9 188.3 L170.8 171.9ZM144.3 170.7 L148.4 188.0 L152.5 170.7ZM161.0 180.6 L163.7 191.8 L166.4 180.6ZM216.6 155.5 L220.7 172.8 L224.8 155.5ZM249.1 139.6 L251.7 150.4 L254.3 139.6ZM112.5 171.4 L116.1 186.6 L119.8 171.4ZM250.1 133.6 L252.8 145.0 L255.5 133.6ZM251.2 135.3 L254.3 148.1 L257.3 135.3ZM220.9 165.4 L223.3 175.5 L225.7 165.4ZM244.3 144.2 L247.2 156.4 L250.1 144.2ZM187.2 174.5 L189.4 183.8 L191.6 174.5ZM130.3 180.0 L133.5 193.3 L136.7 180.0ZM101.0 163.8 L105.1 181.1 L109.2 163.8ZM143.8 178.3 L146.3 188.5 L148.7 178.3ZM117.4 173.8 L119.8 184.0 L122.2 173.8ZM256.9 136.3 L259.3 146.4 L261.7 136.3ZM267.9 145.2 L271.6 160.9 L275.4 145.2ZM226.2 155.0 L229.7 170.0 L233.3 155.0ZM203.5 161.7 L206.2 173.2 L208.9 161.7ZM225.5 151.5 L229.0 166.4 L232.6 151.5ZM176.2 175.5 L179.4 188.9 L182.5 175.5ZM133.9 177.3 L137.5 192.2 L141.0 177.3ZM182.8 172.8 L186.2 187.4 L189.7 172.8ZM197.0 162.8 L200.9 179.5 L204.9 162.8ZM202.4 160.1 L206.5 177.1 L210.6 160.1ZM85.8 163.5 L89.4 178.7 L93.1 163.5ZM189.8 167.3 L193.3 182.0 L196.8 167.3ZM158.9 180.9 L161.5 191.7 L164.0 180.9ZM69.2 154.2 L72.9 169.7 L76.6 154.2ZM178.0 172.7 L180.9 184.9 L183.9 172.7ZM113.8 169.0 L117.8 185.5 L121.7 169.0ZM64.1 153.8 L66.8 165.1 L69.5 153.8ZM229.5 155.5 L232.4 167.6 L235.2 155.5ZM145.4 173.6 L149.1 189.3 L152.9 173.6ZM135.2 181.1 L137.6 191.3 L140.0 181.1ZM116.4 177.1 L118.8 187.3 L121.3 177.1ZM232.1 151.8 L234.7 162.6 L237.2 151.8ZM96.6 164.4 L100.3 179.9 L104.0 164.4ZM239.7 141.1 L243.0 155.3 L246.4 141.1ZM88.0 167.0 L90.6 177.9 L93.2 167.0Z" fill="url(#trA)" opacity="0.8"/><g filter="url(#mot)"><polygon points="55.2,120.5 55.2,120.5 58.2,146.4 61.2,152.2 64.2,156.6 67.2,159.9 70.2,163.1 73.2,165.1 76.2,167.1 79.2,168.8 82.2,170.4 85.2,172.0 88.2,170.9 91.2,169.5 94.2,168.5 97.2,169.8 100.2,171.1 103.2,172.4 106.2,173.3 109.2,174.1 112.2,174.9 115.2,175.2 118.2,175.3 121.2,175.3 124.2,176.5 127.2,177.9 130.2,179.4 133.2,182.0 136.2,183.8 139.2,180.6 142.2,177.4 145.2,176.9 148.2,177.5 151.2,178.0 154.2,178.6 157.2,178.7 160.2,178.0 163.2,177.3 166.2,176.6 169.2,175.6 172.2,174.7 175.2,173.7 178.2,172.8 181.2,172.0 184.2,171.3 187.2,170.6 190.2,169.3 193.2,167.1 196.2,164.9 199.2,162.8 202.2,161.1 205.2,159.4 208.2,157.7 211.2,157.2 214.2,157.0 217.2,156.8 220.2,156.6 223.2,155.6 226.2,153.4 229.2,151.2 232.2,148.7 235.2,144.9 238.2,141.1 241.2,138.5 244.2,137.5 247.2,135.9 250.2,131.5 253.2,127.1 256.2,127.5 259.2,128.6 262.2,130.9 265.2,133.2 268.2,135.6 271.2,138.7 274.2,141.8 277.2,143.5 280.2,144.9 283.2,145.0 284.0,120.5" fill="url(#trB)"/><path d="M194.6 144.8 L199.1 163.7 L203.6 144.8ZM267.1 122.5 L271.9 142.7 L276.7 122.5ZM59.0 134.8 L63.9 155.2 L68.7 134.8ZM202.2 146.9 L205.1 159.0 L207.9 146.9ZM160.2 165.4 L164.1 181.8 L168.0 165.4ZM184.8 165.1 L188.0 178.2 L191.1 165.1ZM116.5 153.2 L120.9 171.8 L125.3 153.2ZM90.7 152.8 L93.6 165.2 L96.5 152.8ZM195.3 159.8 L197.9 170.7 L200.5 159.8ZM252.6 122.4 L255.7 135.5 L258.8 122.4ZM277.7 133.5 L281.0 147.3 L284.3 133.5ZM272.0 130.7 L276.2 148.4 L280.5 130.7ZM99.6 150.5 L103.9 168.4 L108.1 150.5ZM274.1 131.5 L277.4 145.5 L280.7 131.5ZM136.6 172.6 L139.5 185.0 L142.5 172.6ZM68.0 148.4 L72.1 165.4 L76.1 148.4ZM54.6 128.5 L58.0 142.8 L61.4 128.5ZM124.1 160.1 L127.8 175.9 L131.6 160.1ZM124.9 161.8 L129.2 179.9 L133.5 161.8ZM67.6 146.2 L70.2 157.3 L72.9 146.2ZM225.4 141.8 L228.0 152.9 L230.7 141.8ZM232.7 132.3 L236.7 149.0 L240.6 132.3ZM56.3 138.9 L59.3 151.6 L62.3 138.9ZM270.4 132.5 L274.8 151.1 L279.2 132.5ZM265.6 123.1 L269.0 137.5 L272.4 123.1ZM133.6 164.1 L138.1 182.9 L142.5 164.1ZM77.3 148.1 L81.9 167.1 L86.4 148.1ZM248.2 120.5 L253.0 137.1 L257.9 120.5ZM73.9 151.9 L78.0 169.0 L82.1 151.9ZM261.5 121.0 L266.3 141.2 L271.2 121.0ZM178.0 162.4 L181.4 176.5 L184.8 162.4ZM94.7 161.7 L97.7 174.1 L100.6 161.7ZM211.2 143.3 L214.2 155.8 L217.2 143.3ZM64.4 138.8 L68.3 155.1 L72.2 138.8ZM145.7 165.1 L149.7 182.0 L153.7 165.1ZM241.8 127.2 L245.4 142.4 L249.1 127.2ZM67.3 146.4 L69.9 157.7 L72.6 146.4ZM166.7 162.2 L169.7 174.4 L172.6 162.2ZM219.8 137.4 L223.9 154.7 L228.0 137.4ZM233.1 136.2 L236.7 151.5 L240.4 136.2ZM87.9 151.8 L91.2 165.7 L94.5 151.8ZM155.8 155.5 L160.5 175.0 L165.1 155.5ZM275.8 135.1 L279.5 151.0 L283.3 135.1ZM220.1 145.9 L223.4 159.7 L226.7 145.9ZM145.7 168.1 L149.2 182.8 L152.7 168.1ZM278.3 129.2 L282.4 146.4 L286.5 129.2ZM168.2 167.2 L171.0 179.1 L173.8 167.2ZM114.6 153.4 L119.3 173.1 L123.9 153.4ZM135.1 160.0 L139.5 178.7 L144.0 160.0ZM211.0 140.5 L215.4 159.1 L219.9 140.5ZM136.7 165.3 L140.0 179.0 L143.3 165.3ZM163.6 157.7 L167.9 175.6 L172.1 157.7ZM120.0 155.3 L124.2 172.8 L128.3 155.3ZM185.6 161.3 L189.5 177.7 L193.4 161.3ZM110.6 158.4 L114.3 174.0 L118.1 158.4ZM238.7 122.2 L243.2 141.1 L247.8 122.2ZM132.1 164.9 L136.5 183.3 L140.8 164.9ZM241.2 123.9 L245.9 143.3 L250.5 123.9ZM250.4 120.5 L255.4 130.7 L260.3 120.5ZM271.2 131.8 L275.1 148.0 L279.0 131.8ZM90.2 145.0 L95.1 165.4 L99.9 145.0ZM161.6 158.8 L165.9 176.9 L170.3 158.8ZM219.1 143.9 L223.6 162.7 L228.1 143.9ZM185.9 156.0 L189.5 171.2 L193.1 156.0ZM195.2 146.0 L199.3 163.3 L203.4 146.0ZM218.3 152.7 L221.3 165.3 L224.3 152.7ZM154.6 165.9 L157.7 179.0 L160.8 165.9ZM210.8 148.2 L213.5 159.5 L216.2 148.2ZM161.9 170.4 L164.7 181.9 L167.4 170.4ZM84.6 159.8 L87.7 172.5 L90.7 159.8ZM97.6 160.6 L101.3 176.3 L105.0 160.6ZM139.8 160.1 L143.9 177.0 L147.9 160.1ZM108.8 160.1 L111.4 171.0 L114.0 160.1ZM146.0 166.5 L149.6 181.6 L153.2 166.5ZM80.0 152.5 L83.5 167.2 L87.0 152.5ZM62.6 143.7 L65.5 155.6 L68.3 143.7ZM177.4 159.5 L181.4 176.3 L185.4 159.5ZM271.9 130.1 L275.5 145.2 L279.1 130.1ZM238.9 126.8 L242.4 141.4 L245.9 126.8ZM85.7 152.3 L89.6 168.9 L93.6 152.3ZM271.2 126.6 L275.3 143.6 L279.3 126.6ZM134.6 169.1 L137.2 180.0 L139.8 169.1ZM77.7 151.8 L81.8 168.9 L85.9 151.8ZM84.6 148.8 L89.3 168.7 L94.0 148.8ZM139.7 165.6 L142.8 178.8 L146.0 165.6ZM120.1 157.5 L123.6 172.3 L127.1 157.5ZM272.1 127.7 L276.1 144.6 L280.2 127.7ZM112.6 155.1 L116.4 171.0 L120.2 155.1ZM146.9 160.8 L151.9 181.7 L156.8 160.8ZM165.5 164.3 L169.2 180.1 L173.0 164.3ZM81.3 154.8 L85.0 170.1 L88.7 154.8ZM119.4 155.1 L124.0 174.4 L128.6 155.1ZM57.0 135.0 L60.3 148.6 L63.5 135.0ZM267.1 127.1 L270.3 140.5 L273.4 127.1ZM113.2 158.4 L118.2 179.3 L123.2 158.4ZM120.3 160.4 L124.0 176.1 L127.8 160.4ZM199.7 144.0 L204.1 162.4 L208.5 144.0ZM80.8 154.3 L84.2 168.3 L87.5 154.3ZM175.4 163.0 L178.8 176.9 L182.1 163.0ZM174.5 161.3 L177.9 175.8 L181.4 161.3ZM224.2 144.9 L226.9 156.2 L229.6 144.9ZM109.9 156.0 L114.7 176.2 L119.5 156.0ZM256.8 122.6 L259.5 133.6 L262.1 122.6ZM230.5 134.3 L234.5 151.0 L238.5 134.3ZM214.8 143.5 L218.5 159.3 L222.3 143.5ZM261.4 124.7 L264.9 139.6 L268.4 124.7ZM248.0 124.1 L251.3 138.0 L254.6 124.1ZM241.7 126.7 L246.3 146.1 L250.9 126.7ZM212.2 147.6 L215.4 161.4 L218.7 147.6ZM232.1 133.2 L235.1 145.5 L238.0 133.2ZM162.4 162.4 L166.2 178.3 L170.0 162.4ZM128.6 169.1 L132.6 185.9 L136.6 169.1ZM239.0 134.0 L242.1 147.2 L245.3 134.0ZM239.7 121.9 L243.9 139.5 L248.1 121.9ZM58.1 131.0 L63.1 151.8 L68.0 131.0ZM281.9 137.6 L284.6 149.0 L287.3 137.6ZM244.9 123.6 L249.0 141.0 L253.2 123.6ZM271.2 133.0 L274.1 145.3 L277.0 133.0ZM120.9 160.5 L123.9 172.9 L126.8 160.5ZM193.3 156.4 L196.3 168.9 L199.3 156.4Z" fill="url(#trB)"/></g><polygon points="55.2,120.5 55.2,120.5 58.2,145.7 61.2,151.5 64.2,155.8 67.2,159.1 70.2,162.3 73.2,164.3 76.2,166.2 79.2,167.9 82.2,169.5 85.2,171.1 88.2,169.9 91.2,168.5 94.2,167.6 97.2,168.9 100.2,170.1 103.2,171.4 106.2,172.3 109.2,173.0 112.2,173.8 115.2,174.1 118.2,174.2 121.2,174.2 124.2,175.3 127.2,176.7 130.2,178.2 133.2,180.8 136.2,182.6 139.2,179.3 142.2,176.1 145.2,175.6 148.2,176.2 151.2,176.7 154.2,177.2 157.2,177.3 160.2,176.6 163.2,175.9 166.2,175.2 169.2,174.2 172.2,173.2 175.2,172.3 178.2,171.3 181.2,170.5 184.2,169.8 187.2,169.0 190.2,167.7 193.2,165.5 196.2,163.3 199.2,161.1 202.2,159.4 205.2,157.7 208.2,156.0 211.2,155.5 214.2,155.3 217.2,155.0 220.2,154.8 223.2,153.7 226.2,151.5 229.2,149.3 232.2,146.9 235.2,143.0 238.2,139.2 241.2,136.5 244.2,135.6 247.2,133.9 250.2,129.5 253.2,125.1 256.2,125.5 259.2,126.6 262.2,128.9 265.2,131.1 268.2,133.5 271.2,136.6 274.2,139.6 277.2,141.3 280.2,142.7 283.2,142.8 284.0,120.5" fill="url(#trB)" opacity="0.45"/></g></g></g>
<path d="M202.9 80.2 V118.5" stroke="#8c946c" stroke-width="0.7" opacity="0.42"/><path d="M202.9 122.5 V158.4" stroke="#8c946c" stroke-width="0.7" opacity="0.22"/><path d="M166.4 67.8 V118.5" stroke="#8c946c" stroke-width="0.7" opacity="0.42"/><path d="M166.4 122.5 V172.2" stroke="#8c946c" stroke-width="0.7" opacity="0.22"/><path d="M153.1 64.0 V118.5" stroke="#efe8cc" stroke-width="0.7" opacity="0.42"/><path d="M153.1 122.5 V174.6" stroke="#efe8cc" stroke-width="0.7" opacity="0.22"/><path d="M263.8 105.6 V118.5" stroke="#efe8cc" stroke-width="0.7" opacity="0.42"/><path d="M263.8 122.5 V136.6" stroke="#efe8cc" stroke-width="0.7" opacity="0.22"/><path d="M203.0 81.2 V118.5" stroke="#efe8cc" stroke-width="0.7" opacity="0.42"/><path d="M203.0 122.5 V158.5" stroke="#efe8cc" stroke-width="0.7" opacity="0.22"/><path d="M148.8 65.3 V118.5" stroke="#efe8cc" stroke-width="0.7" opacity="0.42"/><path d="M148.8 122.5 V175.4" stroke="#efe8cc" stroke-width="0.7" opacity="0.22"/><path d="M144.2 67.3 V118.5" stroke="#8c946c" stroke-width="0.7" opacity="0.42"/><path d="M144.2 122.5 V172.1" stroke="#8c946c" stroke-width="0.7" opacity="0.22"/><path d="M167.1 68.1 V118.5" stroke="#efe8cc" stroke-width="0.7" opacity="0.42"/><path d="M167.1 122.5 V173.7" stroke="#efe8cc" stroke-width="0.7" opacity="0.22"/><path d="M232.1 91.2 V118.5" stroke="#8c946c" stroke-width="0.7" opacity="0.42"/><path d="M232.1 122.5 V151.3" stroke="#8c946c" stroke-width="0.7" opacity="0.22"/><path d="M216.6 84.7 V118.5" stroke="#efe8cc" stroke-width="0.7" opacity="0.42"/><path d="M216.6 122.5 V158.7" stroke="#efe8cc" stroke-width="0.7" opacity="0.22"/><path d="M171.9 65.6 V118.5" stroke="#efe8cc" stroke-width="0.7" opacity="0.42"/><path d="M171.9 122.5 V172.2" stroke="#efe8cc" stroke-width="0.7" opacity="0.22"/><path d="M155.0 67.7 V118.5" stroke="#efe8cc" stroke-width="0.7" opacity="0.42"/><path d="M155.0 122.5 V176.0" stroke="#efe8cc" stroke-width="0.7" opacity="0.22"/><path d="M273.2 94.1 V118.5" stroke="#efe8cc" stroke-width="0.7" opacity="0.42"/><path d="M273.2 122.5 V142.6" stroke="#efe8cc" stroke-width="0.7" opacity="0.22"/><path d="M147.3 70.5 V118.5" stroke="#8c946c" stroke-width="0.7" opacity="0.42"/><path d="M147.3 122.5 V174.0" stroke="#8c946c" stroke-width="0.7" opacity="0.22"/><path d="M150.2 68.5 V118.5" stroke="#efe8cc" stroke-width="0.7" opacity="0.42"/><path d="M150.2 122.5 V175.5" stroke="#efe8cc" stroke-width="0.7" opacity="0.22"/><path d="M152.1 63.5 V118.5" stroke="#efe8cc" stroke-width="0.7" opacity="0.42"/><path d="M152.1 122.5 V175.2" stroke="#efe8cc" stroke-width="0.7" opacity="0.22"/><path d="M268.3 99.7 V118.5" stroke="#efe8cc" stroke-width="0.7" opacity="0.42"/><path d="M268.3 122.5 V142.2" stroke="#efe8cc" stroke-width="0.7" opacity="0.22"/><path d="M148.3 65.4 V118.5" stroke="#8c946c" stroke-width="0.7" opacity="0.42"/><path d="M148.3 122.5 V173.3" stroke="#8c946c" stroke-width="0.7" opacity="0.22"/><path d="M202.2 83.0 V118.5" stroke="#efe8cc" stroke-width="0.7" opacity="0.42"/><path d="M202.2 122.5 V159.3" stroke="#efe8cc" stroke-width="0.7" opacity="0.22"/><path d="M198.3 75.7 V118.5" stroke="#8c946c" stroke-width="0.7" opacity="0.42"/><path d="M198.3 122.5 V163.4" stroke="#8c946c" stroke-width="0.7" opacity="0.22"/><path d="M169.6 70.1 V118.5" stroke="#efe8cc" stroke-width="0.7" opacity="0.42"/><path d="M169.6 122.5 V170.3" stroke="#efe8cc" stroke-width="0.7" opacity="0.22"/><path d="M222.4 82.0 V118.5" stroke="#efe8cc" stroke-width="0.7" opacity="0.42"/><path d="M222.4 122.5 V157.9" stroke="#efe8cc" stroke-width="0.7" opacity="0.22"/><path d="M258.8 106.5 V118.5" stroke="#efe8cc" stroke-width="0.7" opacity="0.42"/><path d="M258.8 122.5 V133.9" stroke="#efe8cc" stroke-width="0.7" opacity="0.22"/><path d="M201.4 81.3 V118.5" stroke="#efe8cc" stroke-width="0.7" opacity="0.42"/><path d="M201.4 122.5 V162.3" stroke="#efe8cc" stroke-width="0.7" opacity="0.22"/><path d="M181.2 68.0 V118.5" stroke="#efe8cc" stroke-width="0.7" opacity="0.42"/><path d="M181.2 122.5 V172.1" stroke="#efe8cc" stroke-width="0.7" opacity="0.22"/><path d="M228.5 88.4 V118.5" stroke="#efe8cc" stroke-width="0.7" opacity="0.42"/><path d="M228.5 122.5 V154.0" stroke="#efe8cc" stroke-width="0.7" opacity="0.22"/><path d="M203.0 82.5 V118.5" stroke="#8c946c" stroke-width="0.7" opacity="0.42"/><path d="M203.0 122.5 V162.7" stroke="#8c946c" stroke-width="0.7" opacity="0.22"/><path d="M193.7 73.8 V118.5" stroke="#efe8cc" stroke-width="0.7" opacity="0.42"/><path d="M193.7 122.5 V167.7" stroke="#efe8cc" stroke-width="0.7" opacity="0.22"/><path d="M224.9 83.3 V118.5" stroke="#efe8cc" stroke-width="0.7" opacity="0.42"/><path d="M224.9 122.5 V154.9" stroke="#efe8cc" stroke-width="0.7" opacity="0.22"/><path d="M217.0 85.7 V118.5" stroke="#8c946c" stroke-width="0.7" opacity="0.42"/><path d="M217.0 122.5 V157.0" stroke="#8c946c" stroke-width="0.7" opacity="0.22"/><path d="M198.6 75.9 V118.5" stroke="#efe8cc" stroke-width="0.7" opacity="0.42"/><path d="M198.6 122.5 V162.7" stroke="#efe8cc" stroke-width="0.7" opacity="0.22"/><path d="M175.5 67.9 V118.5" stroke="#8c946c" stroke-width="0.7" opacity="0.42"/><path d="M175.5 122.5 V169.7" stroke="#8c946c" stroke-width="0.7" opacity="0.22"/><path d="M222.9 84.2 V118.5" stroke="#efe8cc" stroke-width="0.7" opacity="0.42"/><path d="M222.9 122.5 V154.4" stroke="#efe8cc" stroke-width="0.7" opacity="0.22"/><path d="M275.8 92.0 V118.5" stroke="#efe8cc" stroke-width="0.7" opacity="0.42"/><path d="M275.8 122.5 V147.1" stroke="#efe8cc" stroke-width="0.7" opacity="0.22"/>
<g filter="url(#b6)"><ellipse cx="18" cy="104" rx="40" ry="26" fill="#e6ece6" opacity="0.9"/><ellipse cx="52" cy="156" rx="30" ry="8" fill="#dbe5dc" opacity="0.7"/><ellipse cx="30" cy="125" rx="30" ry="14" fill="#dbe4dc" opacity="0.5"/></g>
<g filter="url(#b3)"><ellipse cx="115" cy="118.5" rx="55" ry="3.6" fill="#dfe8e4" opacity="0.6"/><ellipse cx="225" cy="125" rx="70" ry="6" fill="#e6e9e4" opacity="0.85"/><ellipse cx="100" cy="108" rx="18" ry="5" fill="#dfe7e1" opacity="0.55"/><ellipse cx="150" cy="136" rx="40" ry="5" fill="#e2e6dc" opacity="0.45"/><ellipse cx="120" cy="152" rx="30" ry="5" fill="#d4dcd2" opacity="0.4"/></g>
<rect width="281" height="186.5" filter="url(#grain)"/>
</svg>
<svg id="icons" width="1024" height="596" viewBox="0 0 1024 596" style="left:0;top:0" fill="none" stroke-linecap="butt" stroke-linejoin="miter">
<!-- app icon -->
<g id="appicon">
<circle cx="13.4" cy="12.7" r="6.9" fill="#f6921e"/>
<path d="M10 19 L10.1 9.2 Q13.4 5.6 16.7 9.2 L16.8 19 Q13.4 20.4 10 19Z" fill="#f1c5a2"/>
<path d="M9.9 9.4 Q10 5.6 13.4 5.5 Q16.8 5.6 16.9 9.4 Q13.4 7.6 9.9 9.4Z" fill="#2a1c16"/>
<rect x="10.6" y="9.5" width="5.6" height="2.4" rx="1.1" fill="#a5cde8"/>
<path d="M11.3 14.6 Q13.4 13.4 15.5 14.6 L15.9 19.4 Q13.4 20.2 10.9 19.4Z" fill="#94634e"/>
<path d="M7.7 15.8 L11 16.8 L11.2 19.7 Q8.6 18.6 7.7 15.8Z" fill="#fff"/>
<path d="M19.1 15.8 L15.8 16.8 L15.6 19.7 Q18.2 18.6 19.1 15.8Z" fill="#fff"/>
</g>
<!-- window controls -->
<g stroke="#d9ecfb" stroke-width="1.1">
<path d="M908.9 13 H918"/>
<rect x="953.6" y="9.1" width="8" height="8"/>
<path d="M997.8 8.9 L1006 17.2 M1006 8.9 L997.8 17.2"/>
</g>
<!-- toolbar: back, home, play -->
<path d="M27.2 47.9 H13.6 M19.6 41.2 L13.3 47.9 L19.6 54.6" stroke="#a3a3a3" stroke-width="1.2"/>
<path d="M54.2 47.6 L62.4 39.9 L70.6 47.6 M55.9 46.4 V54.1 H60.2 V48.9 H64.6 V54.1 H68.9 V46.4" stroke="#222" stroke-width="1.4"/>
<path d="M99.4 41.6 V55 L109.2 48.3Z" stroke="#5a5a5a" stroke-width="1.2" stroke-linejoin="round"/>
<!-- save session icon -->
<g stroke="#5a5a5a" stroke-width="1.2">
<path d="M252.1 43.4 A7.4 7.4 0 1 0 261.7 43.4"/>
<path d="M256.9 40 V53.2 M251.9 48.4 L256.9 53.4 L261.9 48.4"/>
</g>
<!-- folder (view) -->
<path d="M561.6 54.2 V41.1 H566.6 L567.9 42.9 H577.4 V54.2Z M561.6 44.6 H577.4" stroke="#4a4a4a" stroke-width="1.2"/>
<path d="M562 43 H577.4 V44.6 H562Z" fill="#8a8a8a" stroke="none"/>
<path d="M622.4 45.6 L625.8 49 L629.2 45.6" stroke="#444" stroke-width="1.1"/>
<!-- filters -->
<g stroke="#444" stroke-width="1.1">
<path d="M654.3 43.3 H663.1 M667.1 43.3 H669 M654.3 48 H656.3 M660.3 48 H669 M654.3 52.7 H663.1 M667.1 52.7 H669"/>
<circle cx="665.1" cy="43.3" r="1.9"/><circle cx="658.3" cy="48" r="1.9"/><circle cx="665.1" cy="52.7" r="1.9"/>
</g>
<!-- search icon -->
<g stroke="#868686" stroke-width="1.2">
<circle cx="754.6" cy="45.3" r="4.4"/><path d="M751.4 48.6 L744.3 55.4"/>
</g>
<!-- dots -->
<g fill="#222"><circle cx="995.3" cy="47.3" r="1.75"/><circle cx="1002.9" cy="47.3" r="1.75"/><circle cx="1010.5" cy="47.3" r="1.75"/></g>
<!-- sidebar icons -->
<g stroke="#444" stroke-width="1.2">
<!-- all files -->
<rect x="16.6" y="91" width="13" height="10.4"/><path d="M14.4 100.8 V89 H27.6"/>
<!-- pictures -->
<rect x="15.4" y="133.2" width="13" height="10.2"/><path d="M17.6 129.6 H26.4 M16.4 131.4 H27.4" stroke="#8a8a8a"/>
<path d="M15.8 142.8 L21.2 138 L23.2 139.8 L24.6 137.4 L28.2 141.8" stroke-width="1"/><circle cx="19.4" cy="135.6" r="0.7" fill="#444" stroke="none"/>
<!-- video -->
<rect x="14.5" y="172.3" width="14" height="12.2"/><path d="M14.5 175.2 H28.5 M14.5 181.6 H28.5 M21.5 175.2 V181.6"/>
<path d="M17.3 172.3 V175.2 M20.1 172.3 V175.2 M22.9 172.3 V175.2 M25.7 172.3 V175.2 M17.3 181.6 V184.5 M20.1 181.6 V184.5 M22.9 181.6 V184.5 M25.7 181.6 V184.5" stroke-width="1"/>
<!-- audio -->
<circle cx="15.7" cy="225.1" r="1.8"/><circle cx="24.9" cy="223.1" r="1.8"/>
<path d="M17.5 225 V214.6 L26.7 212.3 V223 M17.5 217.8 L26.7 215.5"/>
<!-- documents -->
<path d="M19.6 255 V252.6 H29.4 V266 H25.2"/><rect x="14.6" y="255.6" width="10.2" height="13.4"/>
<path d="M16.6 258.4 H22 M16.6 260.5 H22 M16.6 262.6 H22 M16.6 264.7 H22 M16.6 266.6 H20" stroke-width="0.9"/>
<!-- archives -->
<rect x="15.1" y="294.5" width="12" height="14.2"/><path d="M21.1 295.2 V305.8" stroke-dasharray="1 0.9" stroke-width="1.4"/>
<!-- other -->
<rect x="17" y="339.6" width="12.6" height="10"/><path d="M14.6 348.4 V337.6 H27.6"/>
</g>
<!-- heading chevron, select all chevron, sort chevron -->
<path d="M430.4 95.2 L436.2 101.4 L442 95.2" stroke="#333" stroke-width="1.5"/>
<path d="M996.6 123.6 L1000.4 127.6 L1004.2 123.6" stroke="#444" stroke-width="1.1"/>
<path d="M450.8 159 L454.5 155.6 L458.2 159" stroke="#8e8e8e" stroke-width="1"/>
<!-- scrollbar arrows -->
<g stroke="#8c8c8c" stroke-width="1.1">
<path d="M702.6 162.8 L706 159.2 L709.4 162.8"/>
<path d="M702.6 523.4 L706 527 L709.4 523.4"/>
<path d="M216.4 537.6 L213 541 L216.4 544.4"/>
<path d="M688 537.6 L691.4 541 L688 544.4"/>
</g>
<!-- group row: triangle + folder -->
<path d="M271.8 191.8 V202.8 L279.9 197.3Z" fill="#6b6b6b"/>
<path d="M287.2 190.4 H292 V204.7 H287.2Z" fill="#fde39a"/><path d="M291.6 190 H297 V204.4 H291.6Z" fill="#f8cf62"/>
<!-- eye / hash -->
<circle cx="632.7" cy="298" r="7" fill="#9ea4aa"/>
<path d="M627.6 298 Q632.7 293 637.8 298 Q632.7 303 627.6 298Z" fill="#fff"/><circle cx="632.7" cy="298" r="1.7" fill="#9ea4aa"/><circle cx="632.7" cy="298" r="0.7" fill="#fff"/>
<circle cx="651.6" cy="298" r="7" fill="#9ea4aa"/>
<path d="M650.4 294.4 L649.4 301.6 M653.8 294.4 L652.8 301.6 M648 296.7 H655.4 M647.8 299.4 H655.2" stroke="#fff" stroke-width="1.2"/>
<!-- red arrow -->
<path d="M603.4 250.2 L616.5 268.9" stroke="#f20f18" stroke-width="3"/>
<path d="M629.2 287 L608.4 270.2 L619.8 262.2Z" fill="#f20f18"/>
<!-- popout + close in preview -->
<g stroke="#444" stroke-width="1.3"><rect x="733.9" y="160" width="7.6" height="9"/><path d="M733.4 163.6 H730.1 V172.4 H737.4 V169.4"/></g>
<path d="M997.2 161.9 L1007.2 171.9 M1007.2 161.9 L997.2 171.9" stroke="#333" stroke-width="1.2"/>
<!-- explorer icon -->
<g stroke="#2273c6" stroke-width="1.3">
<path d="M815.2 572.2 V579 H799.5 V566.8 H804.4 L805.8 568.6 H807.6 M799.5 570.2 H807.6"/>
<path d="M808.2 573.4 L813.8 567.8" stroke-width="1.6"/><path d="M810.2 566.2 H815.8 V571.6Z" fill="#2273c6" stroke="none"/>
</g>
</svg>

</body>
</html>
